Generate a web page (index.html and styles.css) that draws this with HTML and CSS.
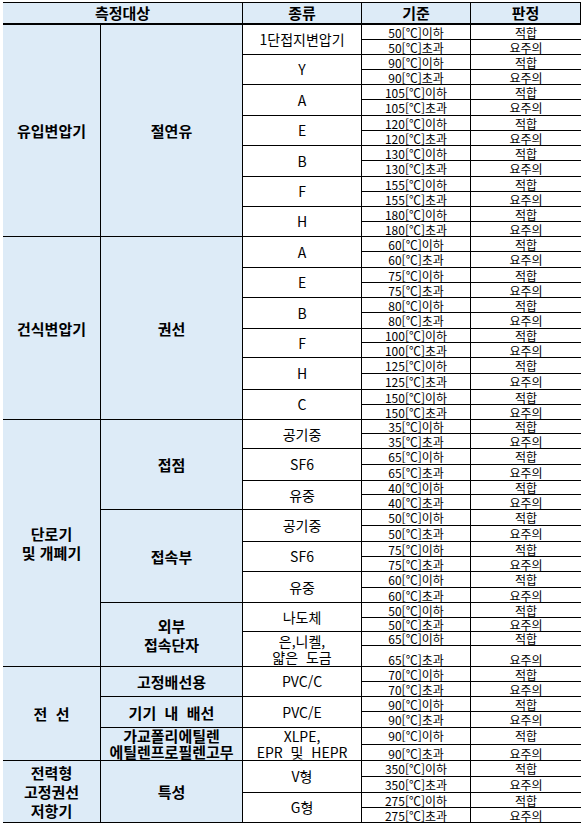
FILE: index.html
```html
<!DOCTYPE html>
<html lang="ko">
<head>
<meta charset="utf-8">
<title>측정대상 기준표</title>
<link rel="stylesheet" href="styles.css">
</head>
<body>
<table class="grid">
  <colgroup>
    <col class="w1"><col class="w2"><col class="w3"><col class="w4"><col class="w5">
  </colgroup>
  <thead>
    <tr class="hr">
      <th colspan="2">측정대상</th><th>종류</th><th>기준</th><th class="last">판정</th>
    </tr>
  </thead>
  <tbody>
    <tr class="h15">
      <td rowspan="14" class="cat">유입변압기</td>
      <td rowspan="14" class="cat">절연유</td>
      <td rowspan="2" class="kind">1단접지변압기</td>
      <td class="std">50[℃]이하</td><td class="res">적합</td>
    </tr>
    <tr class="h15"><td class="std">50[℃]초과</td><td class="res">요주의</td></tr>
    <tr class="h15"><td rowspan="2" class="kind">Y</td><td class="std">90[℃]이하</td><td class="res">적합</td></tr>
    <tr class="h15"><td class="std">90[℃]초과</td><td class="res">요주의</td></tr>
    <tr class="h15"><td rowspan="2" class="kind">A</td><td class="std">105[℃]이하</td><td class="res">적합</td></tr>
    <tr class="h16"><td class="std">105[℃]초과</td><td class="res">요주의</td></tr>
    <tr class="h15"><td rowspan="2" class="kind">E</td><td class="std">120[℃]이하</td><td class="res">적합</td></tr>
    <tr class="h15"><td class="std">120[℃]초과</td><td class="res">요주의</td></tr>
    <tr class="h15"><td rowspan="2" class="kind">B</td><td class="std">130[℃]이하</td><td class="res">적합</td></tr>
    <tr class="h16"><td class="std">130[℃]초과</td><td class="res">요주의</td></tr>
    <tr class="h15"><td rowspan="2" class="kind">F</td><td class="std">155[℃]이하</td><td class="res">적합</td></tr>
    <tr class="h15"><td class="std">155[℃]초과</td><td class="res">요주의</td></tr>
    <tr class="h15"><td rowspan="2" class="kind">H</td><td class="std">180[℃]이하</td><td class="res">적합</td></tr>
    <tr class="h15"><td class="std">180[℃]초과</td><td class="res">요주의</td></tr>

    <tr class="h15">
      <td rowspan="12" class="cat">건식변압기</td>
      <td rowspan="12" class="cat">권선</td>
      <td rowspan="2" class="kind">A</td><td class="std">60[℃]이하</td><td class="res">적합</td>
    </tr>
    <tr class="h16"><td class="std">60[℃]초과</td><td class="res">요주의</td></tr>
    <tr class="h15"><td rowspan="2" class="kind">E</td><td class="std">75[℃]이하</td><td class="res">적합</td></tr>
    <tr class="h15"><td class="std">75[℃]초과</td><td class="res">요주의</td></tr>
    <tr class="h15"><td rowspan="2" class="kind">B</td><td class="std">80[℃]이하</td><td class="res">적합</td></tr>
    <tr class="h16"><td class="std">80[℃]초과</td><td class="res">요주의</td></tr>
    <tr class="h14"><td rowspan="2" class="kind">F</td><td class="std">100[℃]이하</td><td class="res">적합</td></tr>
    <tr class="h15"><td class="std">100[℃]초과</td><td class="res">요주의</td></tr>
    <tr class="h16"><td rowspan="2" class="kind">H</td><td class="std">125[℃]이하</td><td class="res">적합</td></tr>
    <tr class="h16"><td class="std">125[℃]초과</td><td class="res">요주의</td></tr>
    <tr class="h15"><td rowspan="2" class="kind">C</td><td class="std">150[℃]이하</td><td class="res">적합</td></tr>
    <tr class="h15"><td class="std">150[℃]초과</td><td class="res">요주의</td></tr>

    <tr class="h14">
      <td rowspan="16" class="cat">단로기<br>및 개폐기</td>
      <td rowspan="6" class="cat">접점</td>
      <td rowspan="2" class="kind">공기중</td><td class="std">35[℃]이하</td><td class="res">적합</td>
    </tr>
    <tr class="h15"><td class="std">35[℃]초과</td><td class="res">요주의</td></tr>
    <tr class="h16"><td rowspan="2" class="kind">SF6</td><td class="std">65[℃]이하</td><td class="res">적합</td></tr>
    <tr class="h16"><td class="std">65[℃]초과</td><td class="res">요주의</td></tr>
    <tr class="h14"><td rowspan="2" class="kind">유중</td><td class="std">40[℃]이하</td><td class="res">적합</td></tr>
    <tr class="h15"><td class="std">40[℃]초과</td><td class="res">요주의</td></tr>
    <tr class="h16">
      <td rowspan="6" class="cat">접속부</td>
      <td rowspan="2" class="kind">공기중</td><td class="std">50[℃]이하</td><td class="res">적합</td>
    </tr>
    <tr class="h16"><td class="std">50[℃]초과</td><td class="res">요주의</td></tr>
    <tr class="h15"><td rowspan="2" class="kind">SF6</td><td class="std">75[℃]이하</td><td class="res">적합</td></tr>
    <tr class="h15"><td class="std">75[℃]초과</td><td class="res">요주의</td></tr>
    <tr class="h16"><td rowspan="2" class="kind">유중</td><td class="std">60[℃]이하</td><td class="res">적합</td></tr>
    <tr class="h15"><td class="std">60[℃]초과</td><td class="res">요주의</td></tr>
    <tr class="h15">
      <td rowspan="4" class="cat">외부<br>접속단자</td>
      <td rowspan="2" class="kind">나도체</td><td class="std">50[℃]이하</td><td class="res">적합</td>
    </tr>
    <tr class="h14"><td class="std">50[℃]초과</td><td class="res">요주의</td></tr>
    <tr class="h14"><td rowspan="2" class="kind two">은,니켈,<br>얇은&nbsp;&nbsp;도금</td><td class="std">65[℃]이하</td><td class="res">적합</td></tr>
    <tr class="h21"><td class="std low">65[℃]초과</td><td class="res low">요주의</td></tr>

    <tr class="h15">
      <td rowspan="6" class="cat">전&nbsp;&nbsp;선</td>
      <td rowspan="2" class="cat">고정배선용</td>
      <td rowspan="2" class="kind">PVC/C</td><td class="std">70[℃]이하</td><td class="res">적합</td>
    </tr>
    <tr class="h15"><td class="std">70[℃]초과</td><td class="res">요주의</td></tr>
    <tr class="h15">
      <td rowspan="2" class="cat">기기&nbsp;&nbsp;내&nbsp;&nbsp;배선</td>
      <td rowspan="2" class="kind">PVC/E</td><td class="std">90[℃]이하</td><td class="res">적합</td>
    </tr>
    <tr class="h16"><td class="std">90[℃]초과</td><td class="res">요주의</td></tr>
    <tr class="h16">
      <td rowspan="2" class="cat two">가교폴리에틸렌<br>에틸렌프로필렌고무</td>
      <td rowspan="2" class="kind two">XLPE,<br>EPR&nbsp;&nbsp;및&nbsp;&nbsp;HEPR</td><td class="std">90[℃]이하</td><td class="res">적합</td>
    </tr>
    <tr class="h16"><td class="std low">90[℃]초과</td><td class="res low">요주의</td></tr>

    <tr class="h16">
      <td rowspan="4" class="cat three">전력형<br>고정권선<br>저항기</td>
      <td rowspan="4" class="cat">특성</td>
      <td rowspan="2" class="kind">V형</td><td class="std">350[℃]이하</td><td class="res">적합</td>
    </tr>
    <tr class="h16"><td class="std">350[℃]초과</td><td class="res">요주의</td></tr>
    <tr class="h15"><td rowspan="2" class="kind">G형</td><td class="std">275[℃]이하</td><td class="res">적합</td></tr>
    <tr class="h15"><td class="std">275[℃]초과</td><td class="res">요주의</td></tr>
  </tbody>
</table>
</body>
</html>
```

FILE: styles.css
```css
html, body {
  margin: 0;
  padding: 0;
  background: #ffffff;
}

body {
  font-family: "Noto Sans CJK KR", "Noto Sans", sans-serif;
  color: #000000;
}

.grid {
  margin: 2px 0 0 3px;
  width: 578px;
  table-layout: fixed;
  border-collapse: separate;
  border-spacing: 0;
  border-top: 1px solid #000;
}

.w1 { width: 98px; }
.w2 { width: 142px; }
.w3 { width: 119px; }
.w4 { width: 109px; }
.w5 { width: 110px; }

.grid th,
.grid td {
  padding: 0;
  border-right: 1px solid #000;
  border-bottom: 1px solid #000;
  text-align: center;
  vertical-align: middle;
  white-space: nowrap;
}

.grid th {
  background: #ddebf7;
  border-bottom: 2px solid #000;
  font-size: 15px;
  font-weight: 700;
  line-height: 18px;
}

.grid td.res { border-right: none; }
.grid th.last { border-right: 1px solid #000; }

.hr { height: 22px; }
.h14 { height: 14px; }
.h15 { height: 15px; }
.h16 { height: 16px; }
.h21 { height: 21px; }

.cat {
  background: #ddebf7;
  font-size: 15px;
  font-weight: 700;
  line-height: 19px;
}

.cat.two { line-height: 16px; }
.cat.three { line-height: 19px; }

.kind {
  font-size: 14px;
  line-height: 17px;
}

.kind.two { line-height: 16px; }

.std,
.res {
  font-size: 12px;
  line-height: 13px;
}

.grid td.low { vertical-align: bottom; }
```
